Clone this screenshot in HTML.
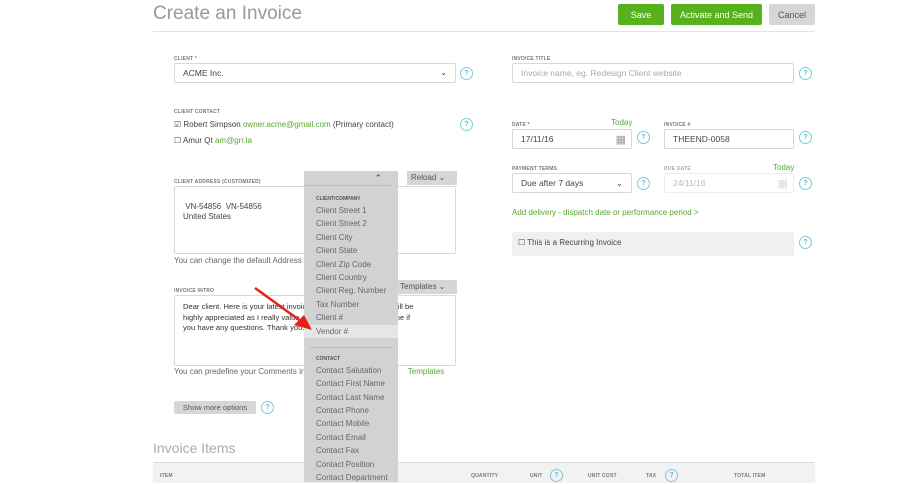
<!DOCTYPE html><html><head><style>
body{margin:0;width:920px;height:482px;overflow:hidden;background:#fff;font-family:"Liberation Sans",sans-serif;color:#444;position:relative}
.a{position:absolute}
.lbl{position:absolute;font-size:5px;font-weight:bold;color:#777;letter-spacing:.2px}
.inp{position:absolute;border:1px solid #d8d8d8;border-radius:2px;background:#fff;font-size:8.5px;box-sizing:border-box;padding-left:8px;display:flex;align-items:center}
.q{position:absolute;width:11px;height:11px;border:1px solid #7cc8dc;border-radius:50%;color:#5bb8d4;font-size:7px;text-align:center;line-height:11px;font-weight:bold}
.btn{position:absolute;height:21px;border-radius:2px;color:#fff;font-size:9px;display:flex;align-items:center;justify-content:center}
.g{color:#5aa832}
.dd div{height:13.4px;line-height:13.4px;padding-left:12px;font-size:8px;color:#666}
</style></head><body>
<div class="a" style="left:153px;top:3px;font-size:19px;color:#999">Create an Invoice</div>
<div class="btn" style="left:618px;top:4px;width:46px;background:#56b11c">Save</div>
<div class="btn" style="left:671px;top:4px;width:91px;background:#56b11c">Activate and Send</div>
<div class="btn" style="left:769px;top:4px;width:46px;background:#d6d6d6;color:#555">Cancel</div>
<div class="a" style="left:153px;top:31px;width:662px;height:1px;background:#e4e4e4"></div>

<div class="lbl" style="left:174px;top:56px">CLIENT *</div>
<div class="inp" style="left:174px;top:63px;width:282px;height:20px">ACME Inc.<span class="a" style="right:8px;top:4px;font-size:8px">⌄</span></div>
<div class="q" style="left:460px;top:67px">?</div>
<div class="lbl" style="left:174px;top:109px">CLIENT CONTACT</div>
<div class="a" style="left:174px;top:120px;font-size:8px">☑ Robert Simpson <span class="g">owner.acme@gmail.com</span> (Primary contact)</div>
<div class="a" style="left:174px;top:136px;font-size:8px">☐ Amur Qt <span class="g">am@grr.la</span></div>
<div class="q" style="left:460px;top:118px">?</div>
<div class="lbl" style="left:174px;top:179px">CLIENT ADDRESS (CUSTOMIZED)</div>
<div class="inp" style="left:174px;top:186px;width:282px;height:68px;align-items:flex-start;padding-top:15px;line-height:10px;font-size:8px">&nbsp;VN-54856 &nbsp;VN-54856<br>United States</div>
<div class="a" style="left:174px;top:256px;font-size:8px;color:#666">You can change the default Address Bl<span style="margin-left:56px" class="g">erences</span></div>
<div class="a" style="left:407px;top:171px;width:50px;height:14px;background:#d6d6d6;font-size:8px;color:#555;line-height:14px;padding-left:4px;box-sizing:border-box">Reload ⌄</div>
<div class="lbl" style="left:174px;top:288px">INVOICE INTRO</div>
<div class="a" style="left:398px;top:280px;width:59px;height:14px;background:#d6d6d6;font-size:8px;color:#555;line-height:14px;padding-left:2px;box-sizing:border-box">Templates ⌄</div>
<div class="inp" style="left:174px;top:295px;width:282px;height:71px;align-items:flex-start;padding-top:6px;line-height:10.5px;font-size:7.6px;color:#333">Dear client. Here is your latest invoice fo &nbsp;&nbsp;&nbsp;&nbsp;&nbsp;&nbsp;&nbsp;&nbsp;&nbsp;&nbsp;&nbsp;&nbsp;&nbsp;&nbsp;&nbsp;&nbsp;&nbsp;&nbsp;&nbsp;&nbsp;&nbsp;ayment will be<br>highly appreciated as I really value o &nbsp;&nbsp;&nbsp;&nbsp;&nbsp;&nbsp;&nbsp;&nbsp;&nbsp;&nbsp;&nbsp;&nbsp;&nbsp;&nbsp;&nbsp;&nbsp;&nbsp;&nbsp;&nbsp;&nbsp;&nbsp;&nbsp;&nbsp;&nbsp;&nbsp;o contact me if<br>you have any questions. Thank you. You</div>
<div class="a" style="left:174px;top:367px;font-size:8px;color:#666">You can predefine your Comments in t<span style="margin-left:98px" class="g">Templates</span></div>
<div class="a" style="left:174px;top:401px;width:82px;height:13px;background:#d6d6d6;border-radius:2px;font-size:7.5px;color:#555;text-align:center;line-height:13px">Show more options</div>
<div class="q" style="left:261px;top:401px">?</div>
<div class="a" style="left:153px;top:440px;font-size:14px;color:#aaa">Invoice Items</div>
<div class="a" style="left:153px;top:462px;width:662px;height:20px;background:#f2f2f2;border-top:1px solid #ddd"></div>
<div class="lbl" style="left:160px;top:473px">ITEM</div>
<div class="lbl" style="left:471px;top:473px">QUANTITY</div>
<div class="lbl" style="left:530px;top:473px">UNIT</div><div class="q" style="left:550px;top:469px">?</div>
<div class="lbl" style="left:588px;top:473px">UNIT COST</div>
<div class="lbl" style="left:646px;top:473px">TAX</div><div class="q" style="left:665px;top:469px">?</div>
<div class="lbl" style="left:734px;top:473px">TOTAL ITEM</div>

<div class="lbl" style="left:512px;top:56px">INVOICE TITLE</div>
<div class="inp" style="left:512px;top:63px;width:282px;height:20px;color:#aaa">Invoice name, eg. Redesign Client website</div>
<div class="q" style="left:799px;top:67px">?</div>
<div class="lbl" style="left:512px;top:122px">DATE *</div><div class="a g" style="left:611px;top:118px;font-size:8px">Today</div>
<div class="inp" style="left:512px;top:129px;width:120px;height:20px">17/11/16<span class="a" style="right:5px;top:3px;font-size:11px;color:#999">▦</span></div>
<div class="q" style="left:637px;top:131px">?</div>
<div class="lbl" style="left:664px;top:122px">INVOICE #</div>
<div class="inp" style="left:664px;top:129px;width:130px;height:20px">THEEND-0058</div>
<div class="q" style="left:799px;top:131px">?</div>
<div class="lbl" style="left:512px;top:166px">PAYMENT TERMS</div>
<div class="inp" style="left:512px;top:173px;width:120px;height:20px">Due after 7 days<span class="a" style="right:8px;top:4px">⌄</span></div>
<div class="q" style="left:637px;top:177px">?</div>
<div class="lbl" style="left:664px;top:166px;color:#aaa">DUE DATE</div><div class="a g" style="left:773px;top:163px;font-size:8px">Today</div>
<div class="inp" style="left:664px;top:173px;width:130px;height:20px;color:#bbb;border-color:#eee">24/11/16<span class="a" style="right:5px;top:3px;font-size:11px;color:#ddd">▦</span></div>
<div class="q" style="left:799px;top:177px">?</div>
<div class="a g" style="left:512px;top:208px;font-size:8px">Add delivery - dispatch date or performance period &gt;</div>
<div class="a" style="left:512px;top:232px;width:282px;height:24px;background:#f0f0f0;font-size:8px;line-height:22px;padding-left:6px;box-sizing:border-box">☐ This is a Recurring Invoice</div>
<div class="q" style="left:799px;top:236px">?</div>

<div class="a dd" style="left:304px;top:171px;width:94px;height:311px;background:#d2d2d2">
<div style="height:14px;line-height:14px;text-align:right;padding-right:10px;font-size:9px;color:#444;border-bottom:1px solid #bbb;margin:0 6px 0 0;padding-left:0">⌃</div>
<div style="height:18px;line-height:26px;font-size:5px;font-weight:bold;color:#555">CLIENT/COMPANY</div>
<div>Client Street 1</div><div>Client Street 2</div><div>Client City</div><div>Client State</div><div>Client Zip Code</div><div>Client Country</div><div>Client Reg. Number</div><div>Tax Number</div><div>Client #</div><div style="background:#e6e6e6">Vendor #</div>
<div style="border-bottom:1px solid #bbb;margin:0 6px 0 6px;padding:0;height:9px"></div>
<div style="height:16px;line-height:22px;font-size:5px;font-weight:bold;color:#555">CONTACT</div>
<div>Contact Salutation</div><div>Contact First Name</div><div>Contact Last Name</div><div>Contact Phone</div><div>Contact Mobile</div><div>Contact Email</div><div>Contact Fax</div><div>Contact Position</div><div>Contact Department</div>
</div>
<svg class="a" style="left:252px;top:285px" width="65" height="50"><line x1="3" y1="3" x2="50" y2="37" stroke="#e8201a" stroke-width="2.5"/><polygon points="60,45 42,40 52,30" fill="#e8201a"/></svg>
</body></html>
